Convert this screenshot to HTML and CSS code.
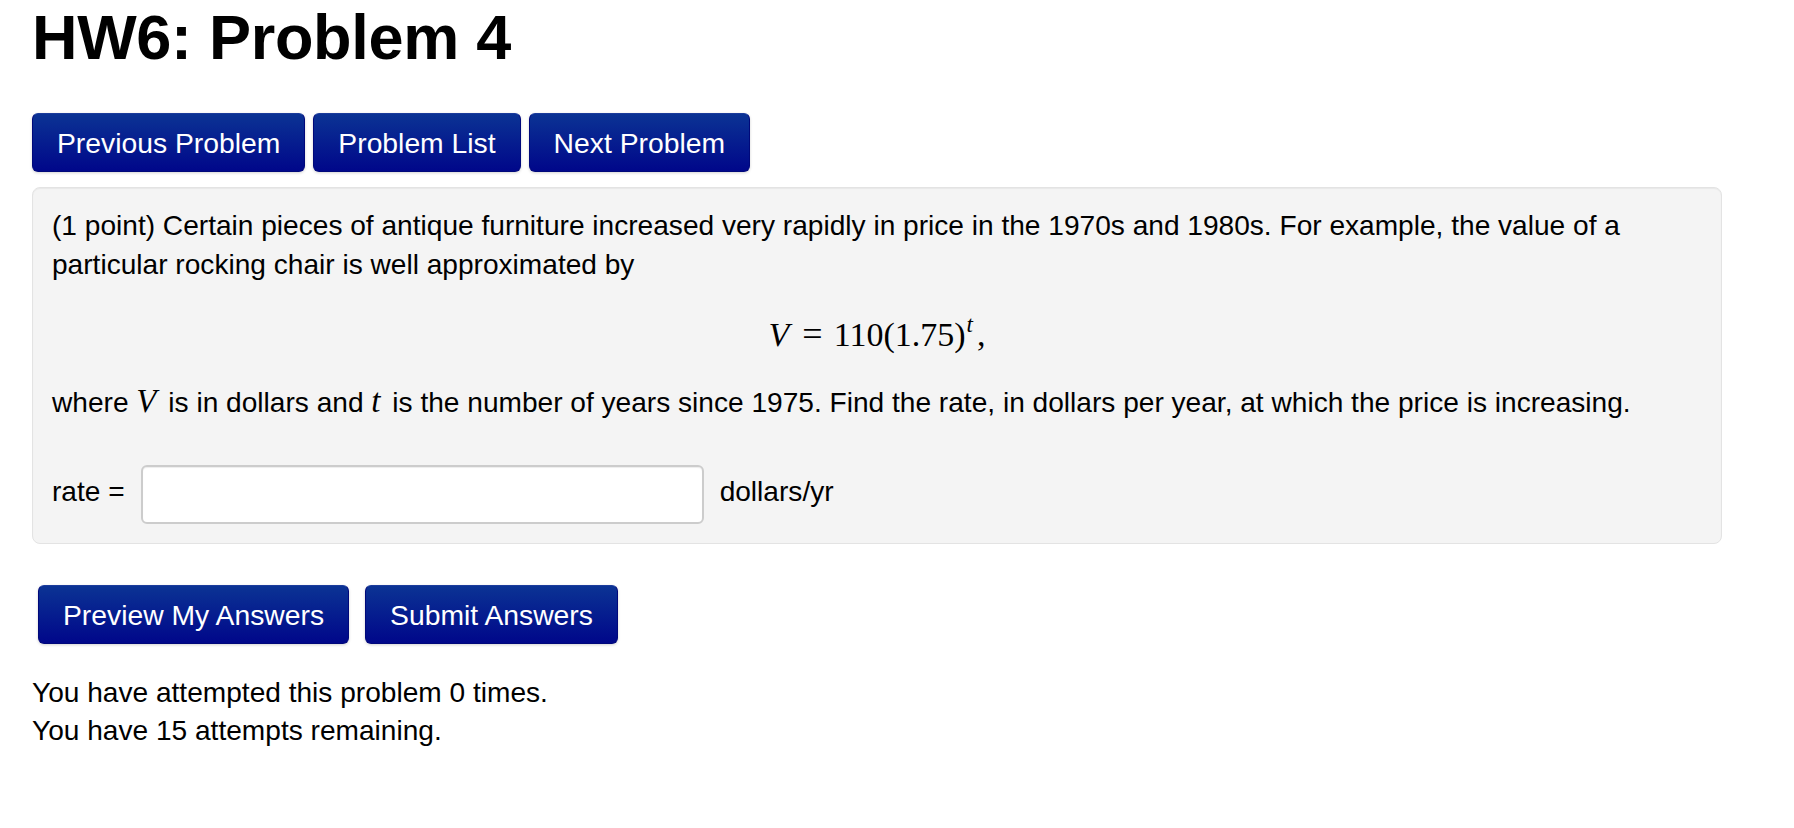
FILE: index.html
```html
<!DOCTYPE html>
<html lang="en">
<head>
<meta charset="utf-8">
<title>HW6: Problem 4</title>
<link rel="stylesheet" href="styles.css">
</head>
<body>
<div class="page">
  <h1 class="title">HW6: Problem 4</h1>
  <nav class="nav-row">
    <a class="btn">Previous Problem</a>
    <a class="btn">Problem List</a>
    <a class="btn">Next Problem</a>
  </nav>
  <div class="well">
    <p class="text">(1 point) Certain pieces of antique furniture increased very rapidly in price in the 1970s and 1980s. For example, the value of a particular rocking chair is well approximated by</p>
    <div class="equation"><span class="mi">V</span><span class="mo">=</span>110(1.75)<sup class="sup mi">t</sup><span class="comma">,</span></div>
    <p class="text">where <span class="mi inline">V</span> is in dollars and <span class="mi inline">t</span> is the number of years since 1975. Find the rate, in dollars per year, at which the price is increasing.</p>
    <div class="answer-row">
      <label class="label" for="rate">rate =</label>
      <input class="answer" id="rate" type="text">
      <span class="label">dollars/yr</span>
    </div>
  </div>
  <div class="submit-row">
    <button class="btn" type="button">Preview My Answers</button>
    <button class="btn" type="button">Submit Answers</button>
  </div>
  <div class="attempts">
    <div>You have attempted this problem 0 times.</div>
    <div>You have 15 attempts remaining.</div>
  </div>
</div>
</body>
</html>
```
FILE: styles.css
```css
html, body {
  margin: 0;
  padding: 0;
  background: #ffffff;
}

body {
  font-family: "Liberation Sans", Arial, Helvetica, sans-serif;
  font-size: 28.1px;
  line-height: 38.5px;
  color: #000000;
}

.page {
  padding: 2px 72px 0 32px;
}

.title {
  margin: 0;
  font-size: 63px;
  line-height: 70px;
  font-weight: bold;
  letter-spacing: -0.3px;
}

.nav-row {
  display: flex;
  gap: 8px;
  margin-top: 41px;
}

.btn {
  display: inline-block;
  box-sizing: border-box;
  height: 59px;
  padding: 9px 24px 8px;
  border: 1px solid #00087a;
  border-top-color: #1c3c9c;
  border-radius: 6px;
  background: linear-gradient(to bottom, #0b3394 0%, #00078a 100%);
  color: #ffffff;
  font-family: "Liberation Sans", Arial, Helvetica, sans-serif;
  font-size: 28.3px;
  line-height: 40px;
  text-decoration: none;
  box-shadow: 0 1px 3px rgba(0, 0, 0, 0.18);
  cursor: pointer;
}

.well {
  margin-top: 15px;
  padding: 19px;
  background: #f4f4f4;
  border: 1px solid #e3e3e3;
  border-radius: 8px;
  box-shadow: inset 0 1px 1px rgba(0, 0, 0, 0.05);
}

.text {
  margin: 0;
}

.equation {
  margin: 30px 0 29px;
  text-align: center;
  font-family: "Liberation Serif", "Times New Roman", serif;
  font-size: 34px;
  line-height: 40px;
}

.mi {
  font-family: "Liberation Serif", "Times New Roman", serif;
  font-style: italic;
}

.inline {
  font-size: 33px;
  line-height: 0;
  padding-right: 4px;
}

.mo {
  padding: 0 11px 0 13px;
  font-size: 36px;
}

.sup {
  font-size: 23px;
  vertical-align: 14px;
  line-height: 0;
  padding-left: 1px;
}

.comma {
  padding-left: 4px;
}

.answer-row {
  display: flex;
  align-items: flex-start;
  margin-top: 42px;
}

.label {
  padding-top: 8px;
}

.answer {
  box-sizing: border-box;
  width: 563px;
  height: 59px;
  margin: 0 16px;
  padding: 4px 12px;
  border: 2px solid #cccccc;
  border-radius: 6px;
  background: #ffffff;
  box-shadow: inset 0 1px 1px rgba(0, 0, 0, 0.075);
  font-family: "Liberation Sans", Arial, sans-serif;
  font-size: 28px;
}

.submit-row {
  display: flex;
  gap: 16px;
  margin: 41px 0 0 6px;
}

.attempts {
  margin-top: 30px;
}
```
